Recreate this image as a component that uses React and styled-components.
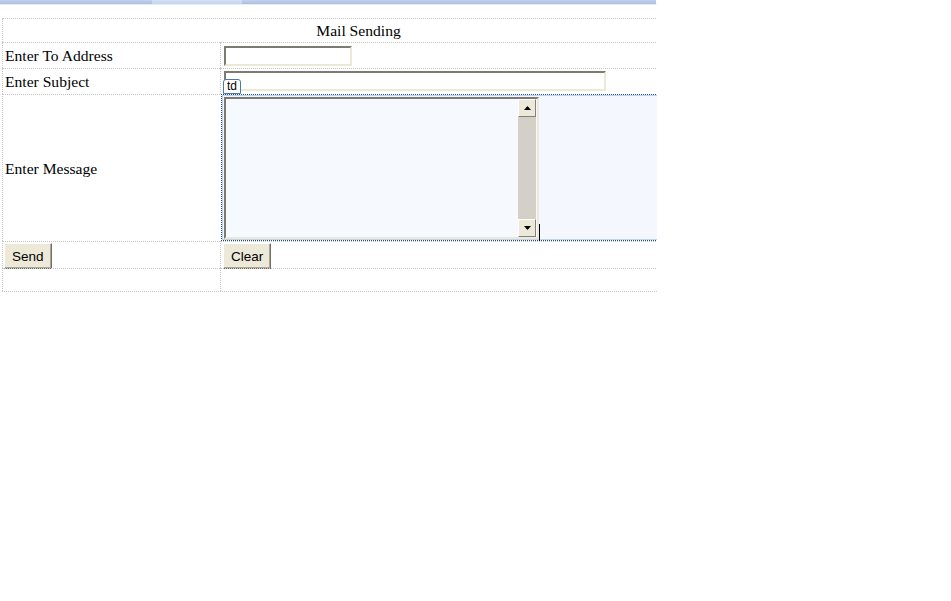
import React from "react";
import styled, { createGlobalStyle } from "styled-components";

const Global = createGlobalStyle`
  html, body { margin: 0; padding: 0; background: #fff; }
  body { width: 951px; height: 601px; overflow: hidden; }
`;

const Page = styled.div`
  width: 951px;
  height: 601px;
  background: #fff;
`;

const Surface = styled.div`
  width: 657px;
  overflow: hidden;
`;

const TopBar = styled.div`
  display: flex;
  height: 4px;
  border-bottom: 1px solid #e6edf7;
`;

const BarPart = styled.div`
  width: ${(p) => p.$w}px;
  flex: none;
  background: ${(p) =>
    p.$light
      ? "linear-gradient(#d4e1f3, #c3d4ee)"
      : "linear-gradient(#c2d2ea, #aac0e1)"};
`;

const Canvas = styled.div`
  padding: 13px 0 0 2px;
`;

const Grid = styled.div`
  display: grid;
  width: 710px;
  grid-template-columns: 218px 492px;
  grid-template-rows: 24px 26px 26px 147px 27px 23px;
  border-bottom: 1px dotted #c6c6c6;
  border-right: 1px dotted #c6c6c6;
  font-family: "Liberation Serif", "Times New Roman", serif;
  font-size: 15.6px;
  color: #000;
`;

const Cell = styled.div`
  position: relative;
  grid-column: span ${(p) => p.$span || 1};
  display: flex;
  align-items: ${(p) => (p.$top ? "flex-start" : "center")};
  justify-content: ${(p) => (p.$center ? "center" : "flex-start")};
  padding: ${(p) => p.$pad || "1px 0 0 2px"};
  border-top: 1px dotted #c6c6c6;
  border-left: 1px dotted #c6c6c6;
  white-space: nowrap;
`;

const SelectedCell = styled(Cell)`
  border: 1px dotted #244d80;
  box-shadow: inset 0 0 0 1px #c3d3ea;
  background: #f4f8fe;
  margin-left: 1px;
`;

const Tag = styled.div`
  position: absolute;
  left: 1px;
  top: -16px;
  height: 13px;
  padding: 0 3px;
  background: #fff;
  border: 1px solid #4a78b0;
  border-radius: 3px 3px 0 0;
  font-family: "Liberation Sans", Arial, sans-serif;
  font-size: 12px;
  line-height: 13px;
  color: #000;
`;

const TextBox = styled.input`
  box-sizing: border-box;
  width: ${(p) => p.$w}px;
  height: 20px;
  margin: 0;
  padding: 0 2px;
  background: #fff;
  border: 2px solid;
  border-color: #7b7b73 #ece9d8 #ece9d8 #7b7b73;
  outline: none;
  font-family: "Liberation Sans", Arial, sans-serif;
  font-size: 13px;
`;

const AreaBox = styled.div`
  box-sizing: border-box;
  display: flex;
  width: 315px;
  height: 142px;
  margin-top: 2px;
  border: 2px solid;
  border-color: #7b7b73 #ece9d8 #ece9d8 #7b7b73;
  background: #f6f9fe;
`;

const Area = styled.textarea`
  flex: 1;
  resize: none;
  border: none;
  outline: none;
  background: transparent;
  overflow: hidden;
`;

const ScrollBar = styled.div`
  display: flex;
  flex-direction: column;
  justify-content: space-between;
  width: 18px;
  background: #d4d0c8;
  margin-right: 1px;
`;

const ScrollBtn = styled.div`
  box-sizing: border-box;
  display: flex;
  align-items: center;
  justify-content: center;
  width: 18px;
  height: 18px;
  background: #ece9d8;
  border: 1px solid;
  border-color: #fff #808080 #808080 #fff;
`;

const Caret = styled.div`
  position: absolute;
  left: 317px;
  bottom: -1px;
  width: 1px;
  height: 17px;
  background: #000;
`;

const Button = styled.button`
  box-sizing: border-box;
  height: 26px;
  margin: 1px 0 0 0;
  padding: 0 7px;
  background: #ece9d8;
  border: 1px solid;
  border-color: #fff #716f64 #716f64 #fff;
  box-shadow: inset -1px -1px 0 #aca899;
  font-family: "Liberation Sans", Arial, sans-serif;
  font-size: 13.5px;
  color: #000;
`;

const Arrow = ({ up }) => (
  <svg width="7" height="4" viewBox="0 0 7 4">
    <path d={up ? "M0 4 L3.5 0 L7 4 Z" : "M0 0 L3.5 4 L7 0 Z"} fill="#000" />
  </svg>
);

export default function App() {
  return (
    <Page>
      <Global />
      <Surface>
        <TopBar>
          <BarPart $w={152} />
          <BarPart $w={90} $light />
          <BarPart $w={414} />
        </TopBar>
        <Canvas>
          <Grid>
            <Cell $span={2} $center>Mail Sending</Cell>

            <Cell>Enter To Address</Cell>
            <Cell $pad="0 0 0 3px">
              <TextBox $w={128} />
            </Cell>

            <Cell>Enter Subject</Cell>
            <Cell $top $pad="2px 0 0 3px">
              <TextBox $w={382} />
            </Cell>

            <Cell>Enter Message</Cell>
            <SelectedCell $top $pad="0 0 0 2px">
              <Tag>td</Tag>
              <AreaBox>
                <Area />
                <ScrollBar>
                  <ScrollBtn><Arrow up /></ScrollBtn>
                  <ScrollBtn><Arrow /></ScrollBtn>
                </ScrollBar>
              </AreaBox>
              <Caret />
            </SelectedCell>

            <Cell $top $pad="0 0 0 1px">
              <Button>Send</Button>
            </Cell>
            <Cell $top $pad="0 0 0 2px">
              <Button>Clear</Button>
            </Cell>

            <Cell />
            <Cell />
          </Grid>
        </Canvas>
      </Surface>
    </Page>
  );
}
